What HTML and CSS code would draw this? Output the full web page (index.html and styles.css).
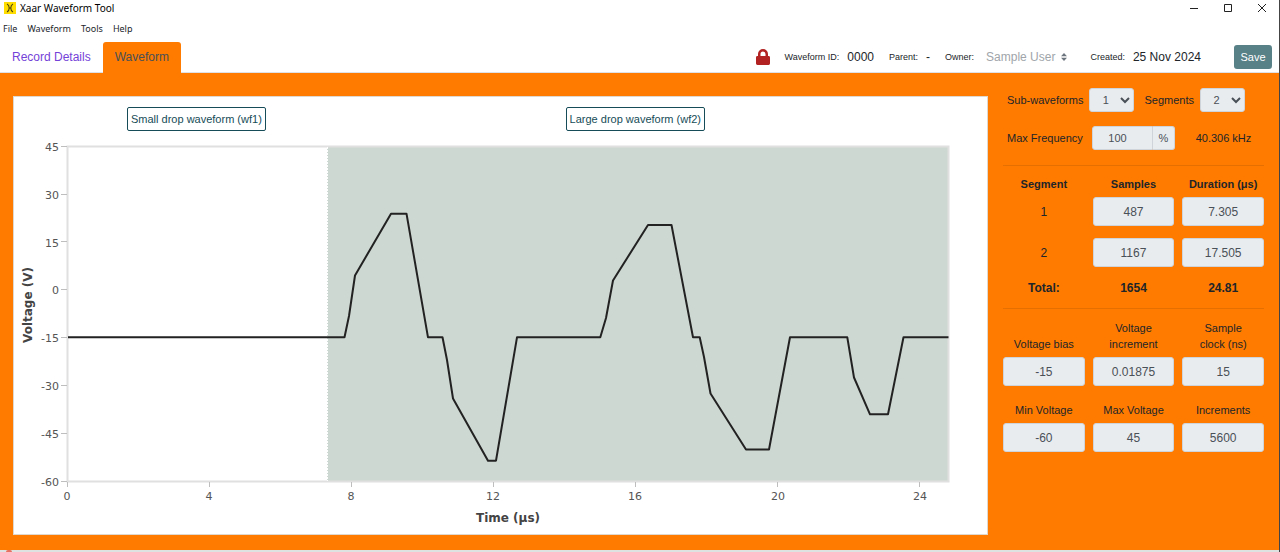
FILE: index.html
```
<!DOCTYPE html>
<html lang="en">
  <head>
    <meta charset="UTF-8" />
    <meta name="viewport" content="width=device-width, initial-scale=1.0" />
    <title>Xaar Waveform Tool</title>
    <link rel="stylesheet" href="styles.css">
  </head>
  <body>
    <header class="titlebar">
      <svg class="app-icon" viewBox="0 0 12 12">
        <rect width="12" height="12" fill="#ffdd00" />
        <path d="M3 2Q5.2 3 5.2 6T3 10M9 2Q6.8 3 6.8 6T9 10M5 6H7" fill="none" stroke="#4a4410" stroke-width="1.1" />
      </svg>
      <h1>Xaar Waveform Tool</h1>
      <div class="window-buttons">
        <button type="button" aria-label="Minimize">
          <svg viewBox="0 0 10 10"><path d="M1 5.5H9" /></svg>
        </button>
        <button type="button" aria-label="Maximize">
          <svg viewBox="0 0 10 10"><path d="M1.5 1.5H8.5V8.5H1.5Z" /></svg>
        </button>
        <button type="button" aria-label="Close">
          <svg viewBox="0 0 10 10"><path d="M1 1L9 9M9 1L1 9" /></svg>
        </button>
      </div>
    </header>
    <nav class="menu">
      <button type="button">File</button>
      <button type="button">Waveform</button>
      <button type="button">Tools</button>
      <button type="button">Help</button>
    </nav>
    <div class="toolbar">
      <nav class="tabs">
        <a href="#details">Record Details</a>
        <a href="#waveform" class="active">Waveform</a>
      </nav>
      <div class="record">
        <svg class="lock" viewBox="0 0 14 16">
          <path d="M2 7V5a5 5 0 0 1 10 0V7h.6A1.4 1.4 0 0 1 14 8.400V14.600A1.4 1.4 0 0 1 12.600 16H1.400A1.4 1.4 0 0 1 0 14.600V8.400A1.4 1.4 0 0 1 1.400 7ZM4.500 7h5V5a2.500 2.500 0 0 0-5 0Z" fill="#b22222" />
        </svg>
        <span class="field">Waveform ID: <b>0000</b></span>
        <span class="field">Parent: <b>-</b></span>
        <span class="field">Owner:
          <button type="button" class="owner">Sample User
            <svg viewBox="0 0 6 8"><path d="M0 3.300L3 0L6 3.300ZM0 4.700H6L3 8Z" fill="#6c757d" /></svg>
          </button>
        </span>
        <span class="field created">Created: <b>25 Nov 2024</b></span>
        <button type="button" class="save">Save</button>
      </div>
    </div>
    <main>
      <section class="chart-card">
        <div class="chart-buttons">
          <button type="button">Small drop waveform (wf1)</button>
          <button type="button">Large drop waveform (wf2)</button>
        </div>
        <svg class="chart" viewBox="14 131 973 403">
          <rect x="327" y="146" width="622" height="335" fill="#ced8d2" />
          <path class="frame" d="M67.500 146.500H948.500V481.500H67.500Z" />
          <path class="divider" d="M327.500 147V481" />
          <path class="ticks" d="M61 146.500H67M61 194.500H67M61 241.500H67M61 289.500H67M61 337.500H67M61 385.500H67M61 433.500H67M61 481.500H67" />
          <path class="ticks" d="M67.500 482V487M209.500 482V487M351.500 482V487M493.500 482V487M635.500 482V487M777.500 482V487M919.500 482V487" />
          <g class="labels y-labels">
            <text x="59" y="151">45</text>
            <text x="59" y="199">30</text>
            <text x="59" y="247">15</text>
            <text x="59" y="294">0</text>
            <text x="59" y="342">-15</text>
            <text x="59" y="390">-30</text>
            <text x="59" y="438">-45</text>
            <text x="59" y="486">-60</text>
          </g>
          <g class="labels x-labels">
            <text x="67" y="500">0</text>
            <text x="209" y="500">4</text>
            <text x="351" y="500">8</text>
            <text x="493" y="500">12</text>
            <text x="635" y="500">16</text>
            <text x="778" y="500">20</text>
            <text x="920" y="500">24</text>
          </g>
          <text class="axis-title" x="508" y="522">Time (μs)</text>
          <text class="axis-title" transform="translate(32 305) rotate(-90)">Voltage (V)</text>
          <path class="wave" d="M68 337.300H344.500L349 316L355 275.500L391 213.700H406.500L428 337.300H442.500L447 360L453 398.500L488 460.700H496L517 337.300H600.300L606 318L613 280.500L648 225H671.500L693 337.300H699.700L704 357L710.500 393.500L746 449.500H769L790 337.300H847.300L854 377.500L870 414.300H888L903.500 337.300H948.500" />
        </svg>
      </section>
      <form class="panel">
        <div class="row selects">
          <label for="subs">Sub-waveforms</label>
          <select id="subs"><option>1</option></select>
          <label for="segs">Segments</label>
          <select id="segs"><option>2</option></select>
        </div>
        <div class="row frequency">
          <label for="freq">Max Frequency</label>
          <div class="input-group">
            <input id="freq" type="text" value="100">
            <span>%</span>
          </div>
          <output>40.306 kHz</output>
        </div>
        <hr>
        <table>
          <thead>
            <tr><th>Segment</th><th>Samples</th><th>Duration (μs)</th></tr>
          </thead>
          <tbody>
            <tr>
              <td>1</td>
              <td><input type="text" value="487" aria-label="Segment 1 samples"></td>
              <td><input type="text" value="7.305" aria-label="Segment 1 duration"></td>
            </tr>
            <tr>
              <td>2</td>
              <td><input type="text" value="1167" aria-label="Segment 2 samples"></td>
              <td><input type="text" value="17.505" aria-label="Segment 2 duration"></td>
            </tr>
          </tbody>
          <tfoot>
            <tr><td>Total:</td><td>1654</td><td>24.81</td></tr>
          </tfoot>
        </table>
        <hr>
        <div class="values">
          <label>Voltage bias <input type="text" value="-15"></label>
          <label>Voltage<br>increment <input type="text" value="0.01875"></label>
          <label>Sample<br>clock (ns) <input type="text" value="15"></label>
          <label>Min Voltage <input type="text" value="-60"></label>
          <label>Max Voltage <input type="text" value="45"></label>
          <label>Increments <input type="text" value="5600"></label>
        </div>
      </form>
    </main>
    <footer><span class="dot"></span></footer>
  </body>
</html>
```
FILE: styles.css
```
* {
  margin: 0;
  padding: 0;
  box-sizing: border-box;
}
body {
  display: flex;
  flex-direction: column;
  min-height: 100vh;
  font-family: "Liberation Sans", Arial, sans-serif;
  font-size: 11px;
  color: #212529;
  background: #fff;
  border-right: 1px solid #444;
}
button,
input,
select {
  font: inherit;
  color: inherit;
}
button {
  background: none;
  border: none;
}
.titlebar {
  display: flex;
  align-items: center;
  height: 16px;
  padding-left: 4px;
  font-family: "Noto Sans", sans-serif;
}
.app-icon {
  width: 12px;
  height: 12px;
  margin-right: 4px;
}
.titlebar h1 {
  font-size: 10px;
  font-weight: 400;
  color: #000;
}
.window-buttons {
  display: flex;
  gap: 24px;
  margin-left: auto;
  margin-right: 12px;
}
.window-buttons button {
  width: 10px;
  height: 10px;
}
.window-buttons svg {
  display: block;
  fill: none;
  stroke: #222;
}
.menu {
  display: flex;
  gap: 10px;
  height: 24px;
  padding-left: 3px;
  font-family: "Noto Sans", sans-serif;
  font-size: 9px;
}
.toolbar {
  display: flex;
  justify-content: space-between;
  height: 33px;
  padding-top: 2px;
  border-bottom: 1px solid #dee2e6;
}
.tabs {
  display: flex;
}
.tabs a {
  height: 31px;
  padding: 0 12px;
  border-radius: 3px 3px 0 0;
  font-size: 12px;
  line-height: 30px;
  color: #7442d8;
  text-decoration: none;
}
.tabs .active {
  color: #495057;
  background: #ff7b00;
}
.record {
  display: flex;
  align-items: center;
  padding-right: 7px;
}
.lock {
  width: 14px;
  height: 16px;
  margin-right: 15px;
}
.field {
  display: flex;
  align-items: center;
  gap: 8px;
  margin-right: 15px;
  font-size: 9px;
}
.field b {
  font-size: 12px;
  font-weight: 400;
}
.owner {
  display: flex;
  align-items: center;
  gap: 6px;
  margin-left: 4px;
  font-size: 12px;
  color: #a0a5aa;
}
.owner svg {
  width: 6px;
  height: 8px;
}
.created {
  margin-left: 8px;
  margin-right: 33px;
}
.save {
  width: 38px;
  height: 24px;
  border-radius: 3px;
  color: #fff;
  background: #588087;
}
main {
  display: grid;
  grid-template-columns: 1fr 261px;
  align-items: start;
  gap: 15px;
  flex: 1;
  padding: 23px 15px 15px 13px;
  background: #ff7b00;
}
.chart-card {
  background: #fff;
  border: 1px solid #dfd8cf;
}
.chart-buttons {
  display: grid;
  grid-template-columns: 51% 1fr;
  justify-items: start;
  padding: 10px 0 0 113px;
}
.chart-buttons button {
  height: 24px;
  padding: 0 3px;
  border: 1px solid #164c57;
  border-radius: 2px;
  color: #164c57;
}
.chart {
  display: block;
  width: 100%;
  font-family: "DejaVu Sans", Verdana, sans-serif;
}
.frame {
  fill: none;
  stroke: #e0e0e0;
  stroke-width: 2;
}
.divider {
  stroke: #fff;
  stroke-dasharray: 2 1;
}
.ticks {
  stroke: #bebebe;
}
.labels {
  font-size: 11px;
  fill: #555;
}
.y-labels {
  text-anchor: end;
}
.x-labels {
  text-anchor: middle;
}
.axis-title {
  font-size: 12px;
  font-weight: 700;
  fill: #444;
  text-anchor: middle;
}
.wave {
  fill: none;
  stroke: #222;
  stroke-width: 2;
  stroke-linejoin: round;
}
.panel {
  margin-top: -8px;
}
.row {
  display: flex;
  align-items: center;
  height: 24px;
  padding-left: 4px;
}
.panel input,
.panel select {
  width: 100%;
  height: 29px;
  border: 1px solid #ced4da;
  border-radius: 3px;
  font-size: 12px;
  text-align: center;
  color: #495057;
  background: #e9ecef;
}
.panel select {
  width: 45px;
  height: 24px;
  margin: 0 10px 0 6px;
  font-size: 11px;
}
.panel #segs {
  margin-right: 0;
}
.frequency {
  margin-top: 14px;
}
.frequency label {
  width: 85px;
}
.input-group {
  display: flex;
  width: 83px;
  height: 24px;
}
.input-group input {
  flex: 1;
  min-width: 0;
  height: 24px;
  padding-right: 10px;
  border-radius: 3px 0 0 3px;
  font-size: 11px;
}
.input-group span {
  width: 22px;
  border: 1px solid #ced4da;
  border-left: none;
  border-radius: 0 3px 3px 0;
  line-height: 22px;
  text-align: center;
  color: #495057;
  background: #e9ecef;
}
.frequency output {
  flex: 1;
  padding-left: 8px;
  text-align: center;
}
hr {
  margin-top: 15px;
  border: none;
  border-top: 1px solid #e56f00;
}
table {
  width: calc(100% + 8px);
  margin: 11px -4px 0;
  table-layout: fixed;
  border-collapse: collapse;
  text-align: center;
  font-size: 12px;
}
th {
  height: 14px;
  font-size: 11px;
}
td {
  height: 40px;
  padding: 0 4px;
}
tbody td {
  height: 41px;
}
tfoot td {
  height: 29px;
  font-weight: 700;
}
table + hr {
  margin-top: 6px;
}
.values {
  display: grid;
  grid-template-columns: repeat(3, 1fr);
  align-items: end;
  gap: 16px 8px;
  margin-top: 11px;
}
.values label {
  text-align: center;
  line-height: 16px;
}
.values input {
  display: block;
  margin-top: 5px;
}
footer {
  height: 2px;
  padding-left: 6px;
  background: #dee2e0;
}
.dot {
  display: block;
  width: 6px;
  height: 2px;
  border-radius: 3px 3px 0 0;
  background: #e8705f;
}
```
